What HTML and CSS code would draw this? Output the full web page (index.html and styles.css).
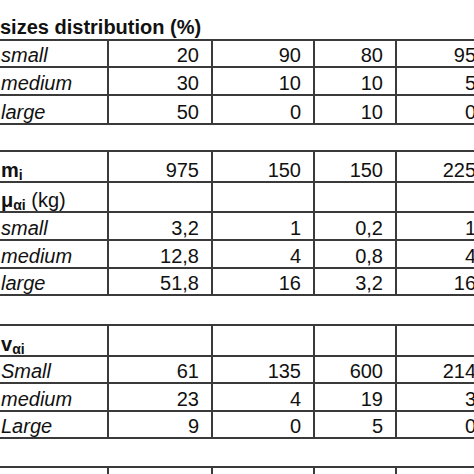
FILE: index.html
```html
<!DOCTYPE html>
<html>
<head>
<meta charset="utf-8">
<link rel="stylesheet" href="styles.css">
</head>
<body>
<table class="grid">
  <colgroup>
    <col class="c-label">
    <col class="c-a">
    <col class="c-b">
    <col class="c-c">
    <col class="c-d">
  </colgroup>
  <tr class="r-title"><td class="title" colspan="5">sizes distribution (%)</td></tr>
  <tr class="r27"><td class="lbl it">small</td><td>20</td><td>90</td><td>80</td><td>95</td></tr>
  <tr class="r28"><td class="lbl it">medium</td><td>30</td><td>10</td><td>10</td><td>5</td></tr>
  <tr class="r29"><td class="lbl it">large</td><td>50</td><td>0</td><td>10</td><td>0</td></tr>
  <tr class="r27 gap"><td></td><td></td><td></td><td></td><td></td></tr>
  <tr class="r31"><td class="lbl"><b>m<sub>i</sub></b></td><td>975</td><td>150</td><td>150</td><td>225</td></tr>
  <tr class="r30"><td class="lbl"><b>μ<sub>αi</sub></b> (kg)</td><td></td><td></td><td></td><td></td></tr>
  <tr class="r28"><td class="lbl it">small</td><td>3,2</td><td>1</td><td>0,2</td><td>1</td></tr>
  <tr class="r28"><td class="lbl it">medium</td><td>12,8</td><td>4</td><td>0,8</td><td>4</td></tr>
  <tr class="r27"><td class="lbl it">large</td><td>51,8</td><td>16</td><td>3,2</td><td>16</td></tr>
  <tr class="r30 gap"><td></td><td></td><td></td><td></td><td></td></tr>
  <tr class="r31"><td class="lbl"><b>v<sub>αi</sub></b></td><td></td><td></td><td></td><td></td></tr>
  <tr class="r27"><td class="lbl it">Small</td><td>61</td><td>135</td><td>600</td><td>214</td></tr>
  <tr class="r28"><td class="lbl it">medium</td><td>23</td><td>4</td><td>19</td><td>3</td></tr>
  <tr class="r27"><td class="lbl it">Large</td><td>9</td><td>0</td><td>5</td><td>0</td></tr>
  <tr class="r29 gap"><td></td><td></td><td></td><td></td><td></td></tr>
  <tr class="r31"><td class="lbl"></td><td></td><td></td><td></td><td></td></tr>
</table>
</body>
</html>
```
FILE: styles.css
```css
html, body {
  margin: 0;
  padding: 0;
  background: #fff;
  overflow: hidden;
  width: 474px;
  height: 474px;
}
.grid {
  border-collapse: collapse;
  table-layout: fixed;
  width: 488px;
  font-family: "Liberation Sans", Arial, sans-serif;
  font-size: 20px;
  color: #111;
}
.c-label { width: 108px; }
.c-a { width: 104px; }
.c-b { width: 102px; }
.c-c { width: 82px; }
.c-d { width: 92px; }
.grid td {
  border: 2px solid #3a3a3a;
  padding: 0 12px 0 0;
  text-align: right;
  vertical-align: bottom;
  line-height: 22px;
  white-space: nowrap;
  overflow: visible;
}
.grid td.lbl {
  text-align: left;
  padding-left: 1px;
  border-left: none;
}
.grid td.title {
  border: none;
  text-align: left;
  font-weight: bold;
  padding: 0;
  line-height: 24px;
}
.grid .gap td { border-left: none; border-right: none; }
.grid td:last-child { border-right: none; }
.it { font-style: italic; }
sub {
  font-size: 14px;
  vertical-align: -3px;
  line-height: 0;
}
.r-title { height: 40px; }
.r27 { height: 27px; }
.r28 { height: 28px; }
.r29 { height: 29px; }
.r30 { height: 30px; }
.r31 { height: 31px; }
```
